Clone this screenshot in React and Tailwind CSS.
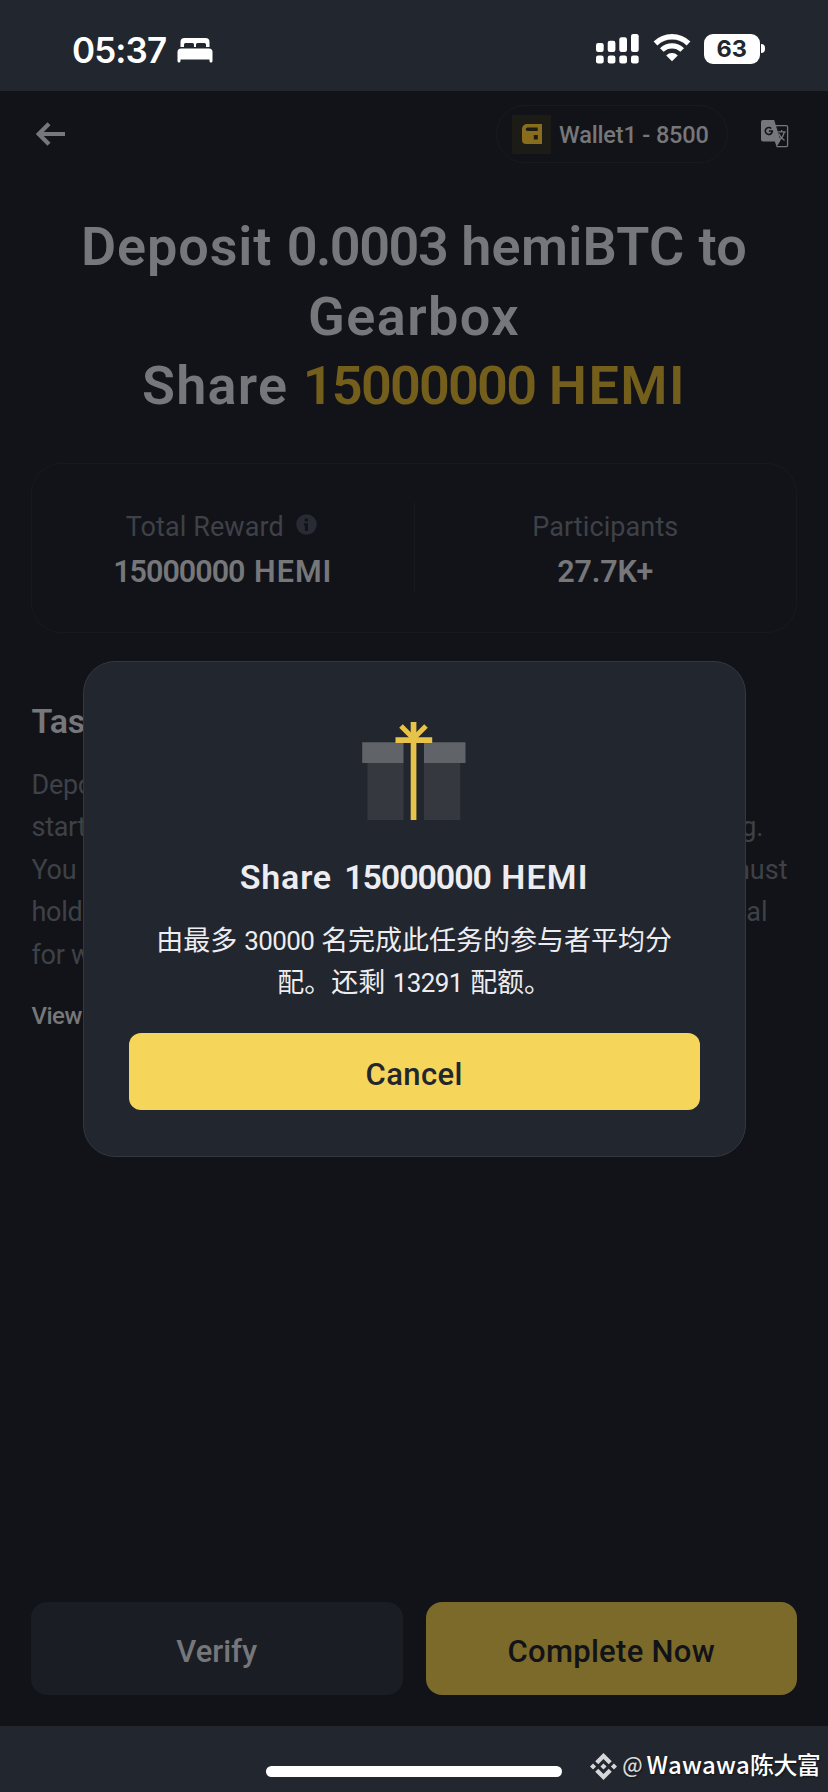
import React from 'react';
import { SiBinance } from 'react-icons/si';

const BedIcon = () => (
  <svg width="36" height="25" viewBox="0 0 36 25" fill="#fff">
    <path d="M3.500 9V4a4 4 0 014-4h21a4 4 0 014 4v5h-3.500V6.500A1.500 1.500 0 0027.500 5H20.500A1.500 1.500 0 0019 6.500V9h-2V6.500A1.500 1.500 0 0015.500 5H8.500A1.500 1.500 0 007 6.500V9z" />
    <path d="M4 10.500h28a3.500 3.500 0 013.500 3.500V23a1.500 1.500 0 01-3 0v-1.500h-29V23a1.500 1.500 0 01-3 0v-9a3.500 3.500 0 013.500-3.500z" />
  </svg>
);

const SignalIcon = () => (
  <svg width="43" height="30" viewBox="0 0 43 30" fill="#fff">
    <rect x="0" y="9" width="7.700" height="9" rx="2.200" />
    <rect x="11.700" y="6.700" width="7.700" height="11.300" rx="2.200" />
    <rect x="23.300" y="3.300" width="7.700" height="14.700" rx="2.200" />
    <rect x="35" y="0" width="7.700" height="18" rx="2.200" />
    <rect x="0" y="21.500" width="7.700" height="8" rx="2.200" />
    <rect x="11.700" y="21.500" width="7.700" height="8" rx="2.200" />
    <rect x="23.300" y="21.500" width="7.700" height="8" rx="2.200" />
    <rect x="35" y="21.500" width="7.700" height="8" rx="2.200" />
  </svg>
);

const WifiIcon = () => (
  <svg width="38" height="28" viewBox="0 0 38 28" fill="none" stroke="#fff">
    <path d="M2.500 9.500a23.500 23.500 0 0133 0" strokeWidth="5.400" />
    <path d="M8.800 16a14.600 14.600 0 0120.400 0" strokeWidth="5.200" />
    <path d="M19 27.200l-5.800-5.800a8.200 8.200 0 0111.600 0z" fill="#fff" stroke="none" />
  </svg>
);

const BackArrow = () => (
  <svg width="30" height="24" viewBox="0 0 30 24" fill="none" stroke="#76777a" strokeWidth="4.200">
    <path d="M29 12H4M13 1.800L2.800 12 13 22.200" />
  </svg>
);

const WalletIcon = () => (
  <svg width="20" height="20" viewBox="0 0 20 20">
    <path fillRule="evenodd" fill="#886d1d" d="M5 0h15v20H4a4 4 0 01-4-4V5a5 5 0 015-5zM5.500 3.500a1.800 1.800 0 000 3.600h10.200V3.500zM11.800 11v4.500h4V11z" />
  </svg>
);

const TranslateIcon = () => (
  <svg width="28" height="28" viewBox="0 0 28 28" fill="none">
    <path d="M14 5.700h11.300a1.300 1.300 0 011.300 1.300v18.300a1.300 1.300 0 01-1.300 1.300H15.500" stroke="#76777a" strokeWidth="1.300" />
    <path d="M2 0h11.200l6.300 20.500-3.900 6.200-1.800-5.300H2a2 2 0 01-2-2V2a2 2 0 012-2z" fill="#76777a" />
    <path d="M10.300 8.500a3.500 3.500 0 101 2.500H7.900" stroke="#121318" strokeWidth="1.600" />
    <path d="M16.500 11.800h8.300M20.600 9.900v1.900M17.800 13.500c1 2.800 3 5.200 5.800 7M23.300 11.800c-.6 3.600-2.200 6-4.800 8.200" stroke="#76777a" strokeWidth="1.300" />
  </svg>
);

const InfoIcon = () => (
  <svg width="21" height="21" viewBox="0 0 21 21">
    <circle cx="10.500" cy="10.500" r="10.300" fill="#282b34" />
    <path fill="#121318" d="M8.700 4.400h3.300v3H8.700zM8 9.200h4V17H8.900v-5.600H8z" />
  </svg>
);

const GiftIcon = () => (
  <svg width="104" height="98" viewBox="0 0 104 98">
    <g fill="#36383f">
      <path d="M5.500 41H41.500V98H5.500z" />
      <path d="M62 41h36.200v57H62z" />
    </g>
    <g fill="#606367">
      <path d="M.200 20.300h41.300V41H.200z" />
      <path d="M62 20.300h41.500V41H62z" />
    </g>
    <path fill="#e8c34a" d="M48.700 0h5.700v98h-5.700zM33.500 15.200h36.700v5.700H33.500z" />
    <path fill="none" stroke="#e8c34a" strokeWidth="5" d="M39 4l12.500 12.500L64 4" />
  </svg>
);

const TASK_LINES = [
  { start: 'Deposit', end: '', width: 'w-[690px]' },
  { start: 'start', end: 'holding.', width: 'w-[732px]' },
  { start: 'You', end: 'must', width: 'w-[756px]' },
  { start: 'hold', end: 'final', width: 'w-[736px]' },
  { start: 'for win', end: '', width: 'w-[600px]' },
];

function StatusBar() {
  return (
    <header className="flex h-[91px] shrink-0 items-start justify-between bg-[#22262e] pl-[72px] pr-[63px] text-white">
      <div className="flex items-center gap-[11px] pt-[30px]">
        <span className="font-['Inter',sans-serif] text-[35px] font-semibold leading-[40px] tracking-[-0.88px]">05:37</span>
        <BedIcon />
      </div>
      <div className="flex items-start pt-[34px]">
        <SignalIcon />
        <div className="ml-[14px]"><WifiIcon /></div>
        <div className="ml-[13px] flex items-center">
          <div className="h-[29.5px] w-[55.5px] rounded-[9px] bg-white text-center font-['Inter',sans-serif] text-[23.5px] font-bold leading-[30px] text-[#22262e]">
            63
          </div>
          <div className="ml-[1.5px] h-[9px] w-[4px] rounded-r-full bg-white" />
        </div>
      </div>
    </header>
  );
}

function Stat({ label, info, children }) {
  return (
    <div className="flex flex-1 flex-col items-center gap-[9px]">
      <div className={`flex items-start gap-3 text-[27px] leading-[36px] tracking-[0.1px] text-[#3e4147] ${info ? 'pr-[3px]' : ''}`}>
        {label}
        {info && <div className="pt-[5px]"><InfoIcon /></div>}
      </div>
      <div className="whitespace-nowrap text-[30.5px] font-semibold leading-[36px] text-[#76777a] [word-spacing:3px]">{children}</div>
    </div>
  );
}

function RewardDialog() {
  return (
    <div className="absolute left-[83px] top-[661px] flex h-[496px] w-[662.5px] flex-col items-center rounded-[32px] border border-[#343741] bg-[#22262e] px-[45px] pt-[60px] text-[#ededf1]">
      <GiftIcon />
      <h2 className="mt-[35px] text-[34px] font-semibold leading-[44px] [word-spacing:3px]">
        <span className="tracking-[0.8px]">Share </span>
        <span className="tracking-[-1.1px]">15000000 </span>
        <span className="tracking-[1.2px]">HEMI</span>
      </h2>
      <p className="mt-[18.5px] text-center font-['Noto_Sans_CJK_SC',sans-serif] text-[27px] leading-[42.6px]">
        由最多<span className="font-['Roboto',sans-serif] text-[26px] leading-none tracking-[-0.6px] [word-spacing:1px]"> 30000 </span>名完成此任务的参与者平均分
        <br />
        配。还剩<span className="font-['Roboto',sans-serif] text-[26px] leading-none tracking-[-0.6px] [word-spacing:1.5px]"> 13291 </span>配额。
      </p>
      <button className="mt-[30px] h-[77.5px] w-full rounded-xl bg-[#f5d65b] pt-[7px] text-[31px] font-medium tracking-[0.4px] text-[#22262e]">
        Cancel
      </button>
    </div>
  );
}

export default function App() {
  return (
    <div className="relative flex h-[1792px] w-[828px] flex-col overflow-hidden bg-[#121318] font-['Roboto','Noto_Sans_CJK_SC',sans-serif] text-[#76777a]">
      <StatusBar />

      {/* Nav */}
      <nav className="flex h-[86px] shrink-0 items-center pl-[36px] pr-[39.5px]">
        <BackArrow />
        <div className="ml-auto flex h-[58px] w-[232px] items-center rounded-full border-[1.5px] border-[#191a1c] pl-[15.5px]">
          <div className="flex h-[39px] w-[39px] items-center justify-center bg-[#1c1b15]">
            <WalletIcon />
          </div>
          <span className="ml-2 whitespace-nowrap pt-[4px] text-[23.5px] font-medium tracking-[-0.15px]">Wallet1 - 8500</span>
        </div>
        <div className="ml-[33px]"><TranslateIcon /></div>
      </nav>

      {/* Campaign title */}
      <h1 className="mt-[35px] text-center text-[54px] font-semibold leading-[69.7px]">
        <span className="tracking-[0.9px]">Deposit </span>
        <span className="tracking-[-1.5px] [word-spacing:2px]">0.0003 </span>
        <span className="tracking-[0.3px]">hemiBTC to</span>
        <br />
        <span className="tracking-[1.4px]">Gearbox</span>
        <br />
        <span className="tracking-[1.2px]">Share </span>
        <span className="text-[#745e1c]">
          <span className="tracking-[-1.8px] [word-spacing:2px]">15000000 </span>
          <span className="tracking-[1.4px]">HEMI</span>
        </span>
      </h1>

      {/* Stats */}
      <section className="relative mx-[31px] mt-[42px] flex h-[170px] shrink-0 rounded-[30px] border-[1.5px] border-[#18191b] pt-[45px]">
        <Stat label="Total Reward" info>
          <span className="tracking-[-1px]">15000000 </span>
          <span className="tracking-[1px]">HEMI</span>
        </Stat>
        <div className="-mt-[7px] h-[90px] w-px bg-[#18191c]" />
        <Stat label="Participants">
          <span className="tracking-[-0.2px]">27.7K+</span>
        </Stat>
      </section>

      {/* Task details */}
      <section className="ml-[31.5px] mt-[66px]">
        <h3 className="text-[34px] font-semibold leading-[44px] tracking-[-0.3px]">Task Details</h3>
        <div className="mt-[20.5px] text-[27px] leading-[42.6px] text-[#3e4147]">
          {TASK_LINES.map((line) => (
            <div key={line.start} className={`flex justify-between whitespace-nowrap ${line.width}`}>
              <span className="tracking-[-0.3px]">{line.start}</span>
              <span>{line.end}</span>
            </div>
          ))}
        </div>
        <div className="mt-[22px] text-[24px] font-medium leading-[34px] tracking-[-0.5px]">View More</div>
      </section>

      {/* Actions */}
      <div className="mb-[31px] mt-auto grid grid-cols-2 gap-[23px] px-[31px] text-[31px] font-medium">
        <button className="h-[93px] rounded-2xl bg-[#1b1d24] pt-[8px]">Verify</button>
        <button className="h-[93px] rounded-2xl bg-[#7b6a2a] pt-[8px] tracking-[0.3px] text-[#121318]">Complete Now</button>
      </div>

      <footer className="flex h-[66px] shrink-0 justify-center bg-[#22262e] pt-10">
        <div className="h-[10.5px] w-[296px] rounded-full bg-white" />
      </footer>

      <RewardDialog />

      {/* Author tag */}
      <div className="absolute bottom-[12px] right-2 flex items-center font-['Noto_Sans_CJK_SC',sans-serif] text-2xl font-medium leading-[32px] text-white [text-shadow:1px_1px_2px_rgba(0,0,0,0.5)]">
        <SiBinance size={27} className="mr-[5px] mt-[4px] text-[#d6d7d9]" />
        <span className="mr-[4px] text-[21px] text-[#d6d7d9]">@</span>
        <span className="tracking-[0.3px]">Wawawa</span>
        <span className="tracking-[-0.7px]">陈大富</span>
      </div>
    </div>
  );
}
